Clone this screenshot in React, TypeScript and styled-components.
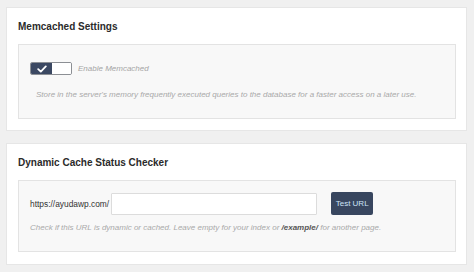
import { createGlobalStyle, styled } from 'styled-components';

const GlobalStyle = createGlobalStyle`
  body {
    margin: 0;
    background: #f0f0f0;
    font-family: 'Liberation Sans', Arial, sans-serif;
  }
`;

export default function App() {
  return (
    <>
      <GlobalStyle />
      <Page>
        <Card $height={124}>
          <Title>Memcached Settings</Title>
          <Panel $height={75}>
            <ToggleRow>
              <Toggle>
                <ToggleOn>
                  <svg width='10' height='8' viewBox='0 0 10 8'>
                    <path d='M1.2 4.2 L3.8 6.6 L8.8 1.4' fill='none' stroke='#fff' strokeWidth='1.8' strokeLinecap='round' strokeLinejoin='round' />
                  </svg>
                </ToggleOn>
                <ToggleOff />
              </Toggle>
              <ToggleLabel>Enable Memcached</ToggleLabel>
            </ToggleRow>
            <Hint $indent={6} $top={14}>
              Store in the server's memory frequently executed queries to the database for a faster access on a later use.
            </Hint>
          </Panel>
        </Card>
        <Card $height={122}>
          <Title>Dynamic Cache Status Checker</Title>
          <Panel $height={72}>
            <UrlRow>
              <Prefix>https://ayudawp.com/</Prefix>
              <UrlInput type='text' />
              <TestButton>Test URL</TestButton>
            </UrlRow>
            <Hint $indent={0} $top={7}>
              Check if this URL is dynamic or cached. Leave empty for your index or <b>/example/</b> for another page.
            </Hint>
          </Panel>
        </Card>
      </Page>
    </>
  );
}

const Page = styled.div`
  display: flex;
  flex-direction: column;
  gap: 12px;
  padding: 7px 7px 0 6px;
`;

const Card = styled.div<{ $height: number }>`
  box-sizing: border-box;
  height: ${p => p.$height}px;
  background: #fff;
  border: 1px solid #e6e6e6;
  padding: 11px 10px 0 11px;
`;

const Title = styled.h2`
  margin: 0 0 9px;
  font-size: 10px;
  line-height: 16px;
  font-weight: 700;
  color: #2b2b2b;
`;

const Panel = styled.div<{ $height: number }>`
  box-sizing: border-box;
  height: ${p => p.$height}px;
  background: #f8f8f8;
  border: 1px solid #e3e3e3;
  padding: 11px 11px 0;
`;

const ToggleRow = styled.div`
  display: flex;
  align-items: center;
  gap: 6px;
  margin-top: 6px;
`;

const Toggle = styled.div`
  display: flex;
  width: 42px;
  height: 13px;
  box-sizing: border-box;
  border: 1px solid #8c8f94;
  border-radius: 2px;
  overflow: hidden;
`;

const ToggleOn = styled.div`
  width: 21px;
  background: #3b4862;
  display: flex;
  align-items: center;
  justify-content: center;
`;

const ToggleOff = styled.div`
  flex: 1;
  background: #fff;
`;

const ToggleLabel = styled.span`
  font-size: 8px;
  font-style: italic;
  color: #a5a5a5;
`;

const Hint = styled.p<{ $indent: number; $top: number }>`
  margin: ${p => p.$top}px 0 0 ${p => p.$indent}px;
  font-size: 8px;
  line-height: 11px;
  font-style: italic;
  color: #a9a9a9;
  white-space: nowrap;

  b {
    color: #555;
    font-weight: 700;
  }
`;

const UrlRow = styled.div`
  display: flex;
  align-items: center;
  height: 23px;
`;

const Prefix = styled.span`
  font-size: 8.4px;
  color: #333;
  margin-right: 2px;
`;

const UrlInput = styled.input`
  box-sizing: border-box;
  width: 206px;
  height: 22px;
  border: 1px solid #dcdcdc;
  border-radius: 1px;
  background: #fff;
  outline: none;
  padding: 0 4px;
`;

const TestButton = styled.button`
  box-sizing: border-box;
  margin-left: 14px;
  width: 42px;
  height: 23px;
  border: none;
  border-radius: 2px;
  background: #38465f;
  color: #cde3f7;
  font-family: 'Liberation Sans', Arial, sans-serif;
  font-size: 8px;
  padding: 0;
`;
